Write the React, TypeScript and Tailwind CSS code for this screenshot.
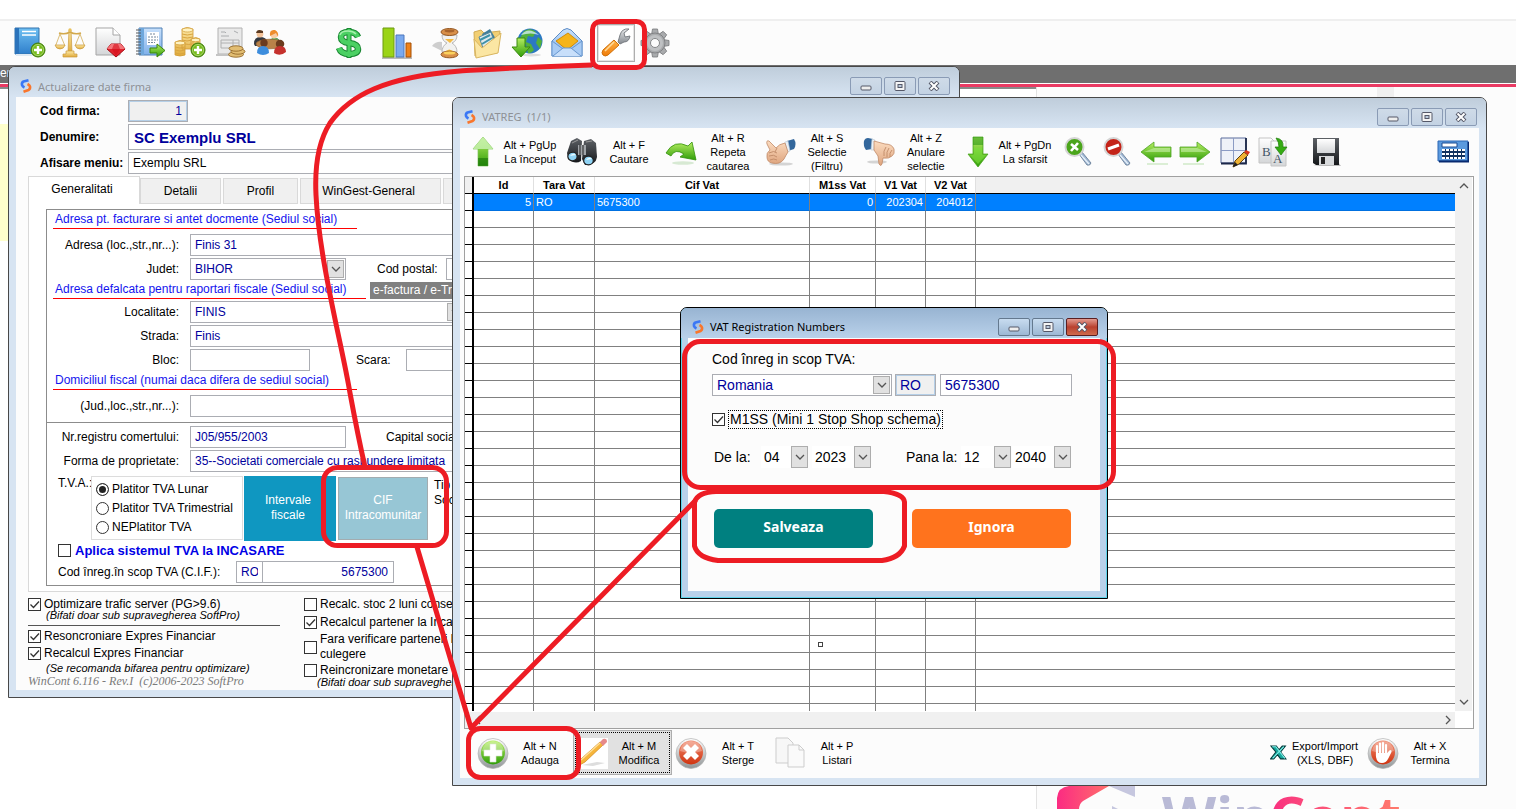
import React from "react";

type Kids = { children?: React.ReactNode };

/* ---------- icons ---------- */

function Ico({ children, className = "size-8" }: Kids & { className?: string }) {
  return (
    <svg viewBox="0 0 32 32" className={className + " shrink-0"} aria-hidden="true">
      {children}
    </svg>
  );
}

function Gradients() {
  const defs: [string, string, string][] = [
    ["gGreen", "#b6ee62", "#2f9d08"],
    ["gBlue", "#6fc0f2", "#2f7fcb"],
    ["gGold", "#fdeaa8", "#e0aa3a"],
    ["gOrange", "#ffb347", "#f07c0a"],
    ["gGrey", "#ffffff", "#d4d6d8"],
    ["gSteel", "#e6e8ea", "#84898f"],
    ["gSky", "#c9e1fb", "#7fb0ea"],
    ["gSkin", "#fcdcc0", "#dfa680"],
    ["gBall", "#f08a6e", "#d0330f"],
    ["gDark", "#5d6166", "#15171a"],
    ["gFrame", "#ffffff", "#8f9496"],
  ];
  return (
    <svg className="absolute size-0" aria-hidden="true">
      <defs>
        {defs.map(([id, a, b]) => (
          <linearGradient key={id} id={id} x1="0" y1="0" x2="0" y2="1">
            <stop offset="0" stopColor={a} />
            <stop offset="1" stopColor={b} />
          </linearGradient>
        ))}
      </defs>
    </svg>
  );
}

const PlusBadge = () => (
  <g>
    <circle cx="24" cy="23" r="7" fill="#69a91b" stroke="#3f7d08" />
    <circle cx="24" cy="23" r="5.6" fill="#76bb1c" stroke="#b5dd7c" strokeWidth=".8" />
    <path d="M24 19v8M20 23h8" stroke="#fff" strokeWidth="2.4" />
  </g>
);

const BookIcon = () => (
  <Ico>
    <path d="M1 1h24v26H1z" fill="url(#gBlue)" stroke="#3273ad" />
    <path d="M1 1h4v26H1z" fill="#2b73bb" />
    <path d="M8 4.500h14M8 8h14" stroke="#fff" strokeWidth="1.3" />
    <path d="M2 28h22" stroke="#dfe9f2" strokeWidth="2" />
    <PlusBadge />
  </Ico>
);
const ScalesIcon = () => (
  <Ico>
    <path d="M15 3h2l1 22h-4z" fill="url(#gGold)" stroke="#c89a3c" strokeWidth=".7" />
    <path d="M5 6q6 2 11-1 5 3 11 1" fill="none" stroke="#d3a94c" strokeWidth="1.6" />
    <path d="M6 7L1.500 19M6 7l5 12M26 7l-5 12M26 7l4.500 12" stroke="#d8b76a" strokeWidth=".9" />
    <path d="M1 18h10q-1 4-5 4t-5-4zM21 18h10q-1 4-5 4t-5-4z" fill="url(#gGold)" stroke="#c89a3c" strokeWidth=".7" />
    <path d="M12 24h8v3h3v3H9v-3h3z" fill="url(#gGold)" stroke="#c89a3c" strokeWidth=".7" />
    <circle cx="16" cy="3" r="1.700" fill="#e9c25c" />
  </Ico>
);
const GemDocIcon = () => (
  <Ico>
    <path d="M2 1h17l7 7v20H2z" fill="url(#gGrey)" stroke="#a5a5a5" />
    <path d="M19 1v7h7" fill="#fff" stroke="#a5a5a5" />
    <path d="M17 17h10l4 5-9 8-9-8z" fill="#e2232d" stroke="#a80c14" />
    <path d="M17 17h10l4 5H13z" fill="#f4757a" />
    <path d="M18 22l4 7 4-7-2-5h-4z" fill="#d30f1b" opacity=".6" />
  </Ico>
);
const NotebookIcon = () => (
  <Ico>
    <path d="M5 1h23v27H5z" fill="url(#gSky)" stroke="#4f80b6" />
    <path d="M5 1h5v27H5z" fill="#6ea7dc" />
    <path d="M13 5h12v13H13z" fill="#fff" />
    <path d="M16 7h6M14 10h10M14 13h10M14 15.500h7" stroke="#74889c" strokeWidth="1.200" strokeDasharray="2 1" />
    <path d="M2 3h5M2 6h5M2 9h5M2 12h5M2 15h5M2 18h5M2 21h5M2 24h5M2 27h5" stroke="#55585c" strokeWidth="1.200" />
    <path d="M16 21h7v-4l8 6.500-8 6.500v-4h-7z" fill="url(#gGreen)" stroke="#3d850c" />
  </Ico>
);
const CoinsIcon = () => (
  <Ico>
    <g fill="url(#gGold)" stroke="#d09a32" strokeWidth=".8">
      <path d="M8 2q5-3 11 0v20H8zM1 15q5-3 10 0v13q-5 2-10 0zM17 12q5-3 9 0v10h-9z" />
    </g>
    <g fill="#fff3c2" stroke="#d09a32" strokeWidth=".7">
      <ellipse cx="13.500" cy="3" rx="5.500" ry="2" />
      <ellipse cx="6" cy="16" rx="5" ry="1.900" />
      <ellipse cx="21.500" cy="13" rx="4.500" ry="1.700" />
    </g>
    <path d="M8 7q5 2 11 0M8 10q5 2 11 0M8 13q5 2 10 0M11 17q4 1 7 0M1 20q5 2 10 0M1 23q5 2 10 0M1 26q5 2 10 0" fill="none" stroke="#d9a540" />
    <PlusBadge />
  </Ico>
);
const InvoiceIcon = () => (
  <Ico>
    <path d="M4 1h24v26H4z" fill="#e9e9e9" stroke="#b2b2b2" />
    <path d="M7 5h4l1 1M20 4l4 2M7 9h8" stroke="#aaacae" fill="none" />
    <path d="M7 13h18v8H7zM7 16h18M19 13v8" fill="none" stroke="#b0b0b0" />
    <path d="M2 28h16" stroke="#c4c4c4" strokeWidth="2" />
    <g fill="#e2bd72" stroke="#93692a" strokeWidth=".9">
      <ellipse cx="22" cy="27.500" rx="7.500" ry="2.700" />
      <ellipse cx="24" cy="24.500" rx="7" ry="2.700" />
      <ellipse cx="22" cy="21.500" rx="7" ry="2.700" />
    </g>
  </Ico>
);
const MeetingIcon = () => (
  <Ico>
    <path d="M0 17q0-7 6-7t8 5l-4 4-9 0zM14 17q1-6 7-6t5 8z" fill="#33373f" />
    <path d="M16 14q2-4 6-3t4 6l-8 1z" fill="#5cb25e" />
    <ellipse cx="16" cy="17" rx="14" ry="4.800" fill="#b98249" stroke="#8c5c2d" strokeWidth=".6" />
    <circle cx="6" cy="7" r="3.400" fill="#f3c39a" />
    <path d="M2 6q1-5 7-2v2z" fill="#5b3a21" />
    <circle cx="20" cy="8" r="3.400" fill="#f7cda6" />
    <path d="M16 9q-1-7 5-6 4 2 3 7l-2-4z" fill="#ee8c2c" />
    <circle cx="10" cy="16" r="3.700" fill="#6b3b1e" />
    <circle cx="26" cy="17" r="4.200" fill="#6b3b1e" />
    <path d="M3 26q0-7 6-7t6 7q-6 4-12 0z" fill="#3d8ddd" />
    <path d="M20 26q0-7 6-7t6 6q-6 5-12 1z" fill="#c5312d" />
  </Ico>
);
const DollarIcon = () => (
  <Ico>
    <path d="M16 1v30" stroke="#198c34" strokeWidth="5" />
    <path d="M25 10q-2-5-9-5-8 0-8 5t8 6q9 1 9 6t-9 5q-8 0-10-6" fill="none" stroke="#178530" strokeWidth="6.500" />
    <path d="M16 2v28" stroke="#4bd063" strokeWidth="3" />
    <path d="M25 10q-2-5-9-5-8 0-8 5t8 6q9 1 9 6t-9 5q-8 0-10-6" fill="none" stroke="#4bd063" strokeWidth="4.600" />
    <path d="M23 7q-3-3-8-3-7 0-8 4" fill="none" stroke="#a5efab" strokeWidth="1.500" />
  </Ico>
);
const ChartIcon = () => (
  <Ico>
    <path d="M1 31h30" stroke="#777" />
    <path d="M2 1h11v29H2z" fill="#9bd416" stroke="#6c9a10" />
    <path d="M15 8h8v22h-8z" fill="#7aa9ee" stroke="#4c77bd" />
    <path d="M25 16h5v14h-5z" fill="#f08218" stroke="#a34f04" />
  </Ico>
);
const HourglassIcon = () => (
  <Ico>
    <path d="M1 19q4-5 10-4v9z" fill="#bbb" opacity=".7" />
    <path d="M11 8h15q0 6-5 8 5 3 5 9H11q0-6 5-9-5-2-5-8z" fill="#f2f2f0" stroke="#b9b9b9" />
    <path d="M14 12h9l-4 4zM13 26q5-7 11 0z" fill="#f4bb45" />
    <ellipse cx="18.500" cy="5" rx="8.500" ry="3.500" fill="#d99049" stroke="#955721" />
    <ellipse cx="18.500" cy="4" rx="5" ry="1.400" fill="#a8642c" />
    <ellipse cx="18.500" cy="27.500" rx="8.500" ry="3.300" fill="#d99049" stroke="#955721" />
    <ellipse cx="18.500" cy="26" rx="6" ry="1.600" fill="#fbd25e" />
  </Ico>
);
const FolderIcon = () => (
  <Ico>
    <path d="M3 5l7-2 3 3 16-2-3 22-22 3z" fill="#f2cf73" stroke="#d2ac54" />
    <path d="M11 7l8-5 7 12-10 4z" fill="#3f7d9b" />
    <path d="M8 10l12-5 3 10-11 6z" fill="#dfe9ec" stroke="#58899b" />
    <path d="M9 13l10-5M11 17l10-6" stroke="#3d91a8" strokeWidth="2" />
    <path d="M3 12l8 9 19-15-3 20-22 5z" fill="#fbe6a3" stroke="#d9b661" />
  </Ico>
);
const GlobeIcon = () => (
  <Ico>
    <ellipse cx="20" cy="28" rx="10" ry="1.500" fill="#ddd" />
    <circle cx="19" cy="14" r="12.500" fill="#2c79c2" />
    <path d="M13 4q7-4 12 1l-3 5-5-1-2 6 5 2 3 6q-3 4-6 3l-2-9-7-4zM27 10l4 4-2 8-4-6z" fill="#53b03b" />
    <path d="M10 8q7-9 18 0-8-3-18 0z" fill="#d9efff" opacity=".75" />
    <path d="M6 11h8v9h5l-9 10-9-10h5z" fill="url(#gGreen)" stroke="#3a8a10" />
  </Ico>
);
const MailIcon = () => (
  <Ico>
    <path d="M1 14L12 3q4-3 8 0l11 11v15H1z" fill="url(#gSky)" stroke="#5d8cc6" />
    <path d="M5 14L17 6l10 8-11 9z" fill="#f6b41a" stroke="#d18d0a" />
    <path d="M1 14l11 8h8l11-8v15H1z" fill="#a8cbf4" stroke="#6897cf" />
    <path d="M2 29l10-8h8l10 8" fill="#c8dffa" stroke="#6897cf" />
  </Ico>
);
const WrenchIcon = () => (
  <Ico>
    <path d="M18 15l2-7q2-7 9-6l-5 4 1 4 5-1q-1 6-6 6l-4 2z" fill="url(#gSteel)" stroke="#70757a" strokeWidth=".9" />
    <path d="M14 13l5 5L8 28q-3 2-5 0t0-5z" fill="url(#gOrange)" stroke="#d07009" />
    <path d="M14 15L5 24" stroke="#ffd998" strokeWidth="1.600" />
  </Ico>
);
const GearIcon = () => (
  <Ico>
    <g fill="#a9abad" stroke="#77797b" strokeWidth=".8">
      {[0, 45, 90, 135, 180, 225, 270, 315].map((a) => (
        <path key={a} d="M12.500 8l1-6h5l1 6z" transform={`rotate(${a} 16 16)`} />
      ))}
      <circle cx="16" cy="16" r="10" />
    </g>
    <circle cx="16" cy="16" r="8" fill="#bfc1c3" />
    <circle cx="16" cy="16" r="4.500" fill="#fcfcfc" stroke="#858789" />
  </Ico>
);
const UpArrow = () => (
  <Ico>
    <path d="M16 1l10 12h-5v17H11V13H6z" fill="url(#gGreen)" stroke="#7cc158" strokeWidth=".7" />
    <path d="M16 1l10 12H6z" fill="#c9f2b4" opacity=".8" />
    <path d="M11 22h10v8H11z" fill="#14700a" opacity=".55" />
  </Ico>
);
const DownArrow = () => (
  <Ico>
    <path d="M16 31L6 18h5V1h10v17h5z" fill="url(#gGreen)" stroke="#3fa013" strokeWidth=".7" />
    <path d="M11 1h10v8H11z" fill="#1c8a10" opacity=".5" />
    <path d="M12 12h8v7h4l-8 9-8-9h4z" fill="#7be03c" opacity=".6" />
  </Ico>
);
const BinocularsIcon = () => (
  <Ico>
    <path d="M5 5l6-3 5 3-1 20q-6 4-13-2l-1-6z" fill="url(#gDark)" />
    <path d="M18 5l7-2 5 4 1 14q-1 8-12 8l-3-6z" fill="url(#gDark)" />
    <path d="M12 9h8v10h-8z" fill="#a0a4a8" />
    <path d="M14 9v10M17 9v10" stroke="#222" />
    <ellipse cx="6.500" cy="20.500" rx="4.600" ry="4.200" fill="#8fd3f4" stroke="#222" strokeWidth="1.200" transform="rotate(-20 6.500 20.500)" />
    <ellipse cx="22.500" cy="24.500" rx="4.800" ry="4.400" fill="#8fd3f4" stroke="#222" strokeWidth="1.200" />
    <path d="M4 20q3-4 6-1zM20 24q3-4 6-1z" fill="#eafaff" />
    <path d="M6 7l6-3M20 6l6-1" stroke="#999" />
  </Ico>
);
const RedoArrow = () => (
  <Ico>
    <ellipse cx="18" cy="27" rx="11" ry="1.800" fill="#d7e9d3" />
    <path d="M1 17Q9 3 23 10l4-4 4 18-16-3 4-3Q10 12 6 20z" fill="url(#gGreen)" stroke="#319009" strokeWidth=".8" />
  </Ico>
);
const ThumbUp = () => (
  <Ico>
    <ellipse cx="17" cy="28" rx="12" ry="1.600" fill="#d4d4d4" />
    <path d="M23 5l7-2q3 5 0 10l-6 2z" fill="#33679c" />
    <path d="M21 6l3-1 2 10-3 1z" fill="#eaf1f7" stroke="#b9c6d2" strokeWidth=".6" />
    <path d="M21 7q-6 1-9 5L5 5Q2 4 3 8l3 6q-4 3-3 7 0 5 5 6 8 2 12-4 2-4 4-7z" fill="url(#gSkin)" stroke="#c08a68" strokeWidth=".8" />
    <path d="M5 17q5-3 8 0M5 20q5-2 8 1M6 24q4-2 7 0M13 12l-2 4" fill="none" stroke="#c08a68" strokeWidth=".9" />
  </Ico>
);
const ThumbDown = () => (
  <Ico>
    <ellipse cx="14" cy="26" rx="10" ry="1.600" fill="#d4d4d4" />
    <path d="M1 5q1-3 4-3l5 1-1 10-6 1Q0 10 1 5z" fill="#33679c" />
    <path d="M9 3l3 1-1 10-3 0z" fill="#eaf1f7" stroke="#b9c6d2" strokeWidth=".6" />
    <path d="M11 5l11 3q7 0 9 5 1 5-2 7-3 3-9 2l-1 6q-1 3-3 0l-1-8-4-6z" fill="url(#gSkin)" stroke="#c08a68" strokeWidth=".8" />
    <path d="M23 11q-3 4-2 9M26 12q-3 4-2 9M29 14q-3 3-2 7" fill="none" stroke="#c08a68" strokeWidth=".9" />
  </Ico>
);
const Magnifier = ({ plus }: { plus?: boolean }) => (
  <Ico>
    <path d="M17 18l3-2 9 11q-1 3-4 2z" fill="#9fb8d4" stroke="#6a7f99" strokeWidth=".9" />
    <path d="M19 19l8 9" stroke="#e8f1fa" strokeWidth="1.300" />
    <circle cx="12.500" cy="11" r="9" fill={plus ? "#4ba51b" : "#c42318"} stroke="#d4d4d4" strokeWidth="2" />
    {plus ? (
      <path d="M9 8l7 6M16 7l-7 8" stroke="#fff" strokeWidth="2.600" />
    ) : (
      <path d="M7 13l11-4" stroke="#fff" strokeWidth="3" />
    )}
  </Ico>
);
const SideArrow = ({ right }: { right?: boolean }) => (
  <Ico>
    <g transform={right ? "matrix(-1 0 0 1 32 0)" : undefined}>
      <path d="M7 28h21" stroke="#dbeed5" strokeWidth="2" />
      <path d="M1 16L14 6v5h17v10H14v5z" fill="url(#gGreen)" stroke="#4fa326" strokeWidth=".8" />
      <path d="M14 12h16v4H4z" fill="#d3f6bd" opacity=".5" />
    </g>
  </Ico>
);
const GridPencil = () => (
  <Ico>
    <path d="M3 2h25v25H3z" fill="#eef1f8" stroke="#5a6c9c" />
    <path d="M15.500 2v25M3 14.500h25" stroke="#8b9bc4" />
    <path d="M28 2v25.500H3" fill="none" stroke="#1b2748" strokeWidth="1.800" />
    <path d="M15 31l2-6 9-9 4 3-9 9z" fill="#efb232" stroke="#5d4213" />
    <path d="M26 16l2-2 4 2-2 3z" fill="#d8361c" />
    <path d="M15 31l2-5 3 3z" fill="#222" />
  </Ico>
);
const FontDocs = () => (
  <Ico>
    <path d="M2 2h12l4 4v21H2z" fill="url(#gGrey)" stroke="#c4c4c4" />
    <path d="M14 5h15v25H14z" fill="url(#gGrey)" stroke="#c4c4c4" />
    <text x="5" y="20" fontSize="13" fontFamily="Liberation Serif, serif" fill="#445566">B</text>
    <text x="16" y="27" fontSize="13" fontFamily="Liberation Serif, serif" fill="#445566">A</text>
    <path d="M19 2q8 1 7 9h4l-6 8-6-8h4q0-5-3-9z" fill="#35ab12" stroke="#1c7c08" strokeWidth=".7" />
  </Ico>
);
const FloppyIcon = () => (
  <Ico>
    <path d="M3 30h28l-3-4z" fill="#bbb" />
    <path d="M3 2h26v27H6l-3-2z" fill="url(#gDark)" />
    <path d="M7 3h18v14H7z" fill="url(#gGrey)" />
    <path d="M9 20h15v9H9z" fill="#d8dadc" />
    <path d="M11 21h4v7h-4z" fill="#222" />
  </Ico>
);
const CalcIcon = () => (
  <Ico>
    <path d="M1 5h30v20H1z" fill="#5b9ade" stroke="#2c66b4" />
    <path d="M5 7h15v4H5z" fill="#fff" stroke="#1a4a93" />
    <path d="M5 13h23v10H5z" fill="#10315f" />
    <path d="M5 14h23M5 18h23M5 22h23" stroke="#fff" strokeWidth="2.200" strokeDasharray="3 1" />
    <path d="M2 25.500h29.500V6" fill="none" stroke="#082a70" strokeWidth="1.800" />
  </Ico>
);
const Ball = ({ green, children }: Kids & { green?: boolean }) => (
  <Ico>
    <circle cx="16" cy="16.500" r="15" fill="url(#gFrame)" stroke="#b0b0b0" strokeWidth=".7" />
    <circle cx="16" cy="15.500" r="12" fill={green ? "url(#gGreen)" : "url(#gBall)"} />
    <path d="M5 14Q7 4 16 4t11 10q-11 4-22 0z" fill="#fff" opacity=".3" />
    {children}
  </Ico>
);
const AddIcon = () => (
  <Ball green>
    <path d="M13 7h6v6h6v6h-6v6h-6v-6H7v-6h6z" fill="#fff" stroke="#d9e6d0" strokeWidth=".6" />
  </Ball>
);
const DeleteIcon = () => (
  <Ball>
    <path d="M8 11l4-4 4 4 4-4 4 4-4 4 4 4-4 4-4-4-4 4-4-4 4-4z" fill="#fff" />
  </Ball>
);
const StopIcon = () => (
  <Ball>
    <path d="M10 19V9M13 18V6.500M16 18V6M19 18V8" stroke="#fff" strokeWidth="2.200" strokeLinecap="round" />
    <path d="M9 16h11l3-3q2 0 1.500 2L21 22q-2 4-6 4-5 0-6-6z" fill="#fff" />
  </Ball>
);
const PencilIcon = () => (
  <Ico>
    <path d="M0 1h32v31H0z" fill="#fff" />
    <path d="M6 28l15-3 8 1-12 3z" fill="#ddd" />
    <path d="M2 29l3-7L24 5l3 3L9 25z" fill="#f6b53a" stroke="#cf8417" strokeWidth=".7" />
    <path d="M5 23L24 6" stroke="#ffe09a" strokeWidth="1.300" />
    <path d="M24 5l3-3q4-1 4 3l-4 4z" fill="#e6898a" />
    <path d="M2 29l1-3 2 1z" fill="#333" />
  </Ico>
);
const PagesIcon = () => (
  <Ico>
    <path d="M2 1h12l5 5v20H2z" fill="#f7f7f7" stroke="#cdcdcd" />
    <path d="M14 8h11l5 5v17H14z" fill="#fafafa" stroke="#cdcdcd" />
    <path d="M25 8v5h5" fill="none" stroke="#cdcdcd" />
  </Ico>
);
const ExcelIcon = () => (
  <Ico className="size-[17px]">
    <path d="M2 4h10l5 7 6-7h6l-9 11 10 13H20l-6-8-7 8H1l10-13z" fill="#17a79c" stroke="#043c3c" strokeWidth="2" />
    <path d="M4 5h7l17 22M26 5L5 27" fill="none" stroke="#7ff0ea" strokeWidth="2" />
  </Ico>
);

const Logo = () => (
  <svg viewBox="0 0 16 16" className="size-4 shrink-0" aria-hidden="true">
    <path d="M10.500 2.200L5.500 3.500Q3.500 4.500 4 7q.5 1.500 2.500 2.500" fill="none" stroke="#3b78f5" strokeWidth="2.600" />
    <path d="M5.500 13.800l5-1.800q2-1 1.500-3.500-.5-1.500-2.500-2.500" fill="none" stroke="#f9762c" strokeWidth="2.600" />
  </svg>
);

const Chevron = () => (
  <svg viewBox="0 0 10 6" className="h-[6px] w-[10px]" aria-hidden="true">
    <path d="M1 1l4 4 4-4" fill="none" stroke="#555" strokeWidth="1.300" />
  </svg>
);

/* ---------- controls ---------- */

function CaptionButton({ kind, active }: { kind: "min" | "max" | "close"; active?: boolean }) {
  const tone =
    active && kind === "close"
      ? "border-[#5a1f22] bg-linear-to-b from-[#e29a90] via-[#b9402f] to-[#cf6a4c]"
      : active
        ? "border-[#64798f] bg-linear-to-b from-[#c8dcf0] to-[#9db8d4]"
        : "border-[#8a9bb5] bg-linear-to-b from-[#cfdbe8] to-[#c3d2e3]";
  return (
    <button type="button" aria-label={kind} className={"grid h-[18px] w-8 place-items-center rounded-[2px] border " + tone}>
      <svg viewBox="0 0 14 10" className="h-[10px] w-[14px]" aria-hidden="true">
        {kind === "min" && <rect x="2" y="5" width="10" height="4" rx="1" fill="#eee" stroke="#555868" />}
        {kind === "max" && (
          <g fill="#f4f4f4" stroke="#555868">
            <rect x="2" y="0.500" width="10" height="9" rx="1" />
            <rect x="5" y="3.500" width="4" height="3" fill="#b9c9dc" />
          </g>
        )}
        {kind === "close" && (
          <g>
            <path d="M3 1l8 8M11 1L3 9" stroke="#555868" strokeWidth="4" />
            <path d="M3.500 1.500l7 7M10.500 1.500l-7 7" stroke="#fff" strokeWidth="2" />
          </g>
        )}
      </svg>
    </button>
  );
}

function Frame({ title, active, className, children }: Kids & { title: string; active?: boolean; className: string }) {
  return (
    <section
      className={
        "absolute flex flex-col rounded-t-[7px] border px-[7px] pb-[7px] " +
        (active ? "border-black bg-[#b9d1ea] " : "border-[#484848] bg-[#d7e4f2] ") +
        className
      }
    >
      <header
        className={
          "-mx-[7px] flex h-[30px] shrink-0 items-end gap-[2px] rounded-t-[6px] bg-linear-to-b pr-[9px] pb-[2px] pl-[9px] " +
          (active ? "from-[#98b4d2] to-[#b9d1ea]" : "from-[#bfcddb] to-[#d7e4f2]")
        }
      >
        <h2
          className={
            "flex h-[18px] flex-1 items-center gap-1 font-['Noto_Sans',sans-serif] text-[11px] whitespace-pre " +
            (active ? "text-black" : "text-[#8e9196]")
          }
        >
          <Logo />
          {title}
        </h2>
        <CaptionButton kind="min" active={active} />
        <CaptionButton kind="max" active={active} />
        <CaptionButton kind="close" active={active} />
      </header>
      <div className="flex min-h-0 flex-1 flex-col overflow-hidden bg-[#fcfcfc]">{children}</div>
    </section>
  );
}

const field = "h-[22px] min-w-0 border border-[#abadb3] bg-white px-1 text-[#00009c] outline-none ";

function Row({ id, label, children, className = "mt-[2px]" }: Kids & { id: string; label: string; className?: string }) {
  return (
    <div className={"flex h-[22px] items-center " + className}>
      <label htmlFor={id} className="mr-[11px] w-[132px] shrink-0 text-right whitespace-nowrap">
        {label}
      </label>
      {children}
    </div>
  );
}

function Heading({ children, className }: Kids & { className: string }) {
  return (
    <h3 className={"ml-[6px] shrink-0 border-b border-[#f00] pl-[2px] whitespace-nowrap text-[#1414ee] " + className}>{children}</h3>
  );
}

function Tick({ id, label, checked, children, className = "" }: Kids & { id: string; label?: string; checked?: boolean; className?: string }) {
  return (
    <label htmlFor={id} className={"flex items-center gap-[3px] whitespace-nowrap " + className}>
      <span className="grid size-[13px] shrink-0 place-items-center">
        <input
          id={id}
          type="checkbox"
          defaultChecked={checked}
          className="peer size-[13px] appearance-none border border-[#333] bg-white [grid-area:1/1]"
        />
        <svg viewBox="0 0 13 13" className="pointer-events-none invisible size-[13px] [grid-area:1/1] peer-checked:visible" aria-hidden="true">
          <path d="M2.500 6.500l3 3 5.500-6" fill="none" stroke="#333" strokeWidth="1.300" />
        </svg>
      </span>
      {label}
      {children}
    </label>
  );
}

function Radio({ label, checked }: { label: string; checked?: boolean }) {
  return (
    <label className="flex h-[19px] items-center gap-[3px] whitespace-nowrap">
      <input
        type="radio"
        name="tva"
        defaultChecked={checked}
        className="size-[13px] shrink-0 appearance-none rounded-full border border-[#333] bg-white checked:bg-[#222] checked:shadow-[inset_0_0_0_2px_#fff]"
      />
      {label}
    </label>
  );
}

function Select({ id, value, label, className, bare }: { id: string; value: string; label?: string; className: string; bare?: boolean }) {
  return (
    <span className={"flex h-[22px] shrink-0 items-center bg-white " + (bare ? "" : "border border-[#abadb3] p-px ") + className}>
      <select
        id={id}
        aria-label={label}
        defaultValue={value}
        className={"min-w-0 flex-1 appearance-none outline-none " + (bare ? "pl-[3px] text-black" : "pl-[3px] text-[#00009c]")}
      >
        <option>{value}</option>
      </select>
      <span className="pointer-events-none grid w-[17px] shrink-0 place-items-center self-stretch border border-[#adadad] bg-[#e1e1e1]">
        <Chevron />
      </span>
    </span>
  );
}

/* ---------- application bar ---------- */

function ToolButton({ children, className = "w-10" }: Kids & { className?: string }) {
  return (
    <button type="button" className={"grid h-[38px] shrink-0 place-items-center " + className}>
      {children}
    </button>
  );
}

function MainBar() {
  return (
    <nav className="mt-[19px] flex h-[46px] shrink-0 items-center border-t-2 border-[#efefef] bg-[#fcfcfc] pl-[10px]">
      <ToolButton><BookIcon /></ToolButton>
      <ToolButton><ScalesIcon /></ToolButton>
      <ToolButton><GemDocIcon /></ToolButton>
      <ToolButton><NotebookIcon /></ToolButton>
      <ToolButton><CoinsIcon /></ToolButton>
      <ToolButton><InvoiceIcon /></ToolButton>
      <ToolButton><MeetingIcon /></ToolButton>
      <ToolButton className="ml-[39px] w-10"><DollarIcon /></ToolButton>
      <ToolButton className="ml-2 w-10"><ChartIcon /></ToolButton>
      <ToolButton className="ml-[10px] w-10"><HourglassIcon /></ToolButton>
      <ToolButton><FolderIcon /></ToolButton>
      <ToolButton><GlobeIcon /></ToolButton>
      <ToolButton><MailIcon /></ToolButton>
      <ToolButton className="ml-[10px] w-[38px] border border-[#adadad] bg-white ring-1 ring-[#e4e4e4] ring-inset"><WrenchIcon /></ToolButton>
      <ToolButton><GearIcon /></ToolButton>
    </nav>
  );
}

/* ---------- company window ---------- */

function CompanyWindow() {
  const tab = "h-[26px] border border-[#d9d9d9] bg-[#f0f0f0] ";
  return (
    <Frame title="Actualizare date firma" className="top-[66px] left-2 h-[632px] w-[952px] text-[12px] leading-[15px]">
      <div className="grid grid-cols-[88px_1fr] items-center gap-y-[2px] pt-[3px] pl-6 font-bold">
        <label htmlFor="cod">Cod firma:</label>
        <input id="cod" readOnly defaultValue="1" className="h-[22px] w-[60px] border border-[#abadb3] bg-[#f0f0f0] px-[5px] text-right font-normal text-[#00009c] ring-1 ring-[#b5cfe7] ring-inset" />
        <label htmlFor="den">Denumire:</label>
        <input id="den" defaultValue="SC Exemplu SRL" className="h-[26px] border border-[#abadb3] bg-white px-[5px] text-[15px] text-[#00009c]" />
        <label htmlFor="afis" className="whitespace-nowrap">Afisare meniu:</label>
        <input id="afis" defaultValue="Exemplu SRL" className="h-[22px] border border-[#abadb3] bg-white px-1 font-normal" />
      </div>

      <div className="mt-[2px] ml-3 flex h-7 items-end gap-[2px]" role="tablist">
        <button type="button" role="tab" aria-selected="true" className="-mr-[2px] h-7 w-[112px] border border-b-0 border-[#d9d9d9] bg-white pr-1 pb-[2px]">Generalitati</button>
        <button type="button" role="tab" className={tab + "w-[81px]"}>Detalii</button>
        <button type="button" role="tab" className={tab + "w-[75px]"}>Profil</button>
        <button type="button" role="tab" className={tab + "w-[141px] pr-1"}>WinGest-General</button>
        <button type="button" role="tab" aria-label="Urmatoarele" className={tab + "w-[90px]"} />
      </div>

      <div className="mr-3 ml-3 border border-t-0 border-[#d9d9d9] bg-white pt-[5px] pr-3 pb-[5px] pl-[17px]">
        <div className="border border-[#8c8c8c] pb-[2px]">
          <Heading className="h-[19px] w-[304px] pt-[2px]">Adresa pt. facturare si antet docmente (Sediul social)</Heading>
          <Row id="adr" label="Adresa (loc.,str.,nr...):" className="mt-[5px]">
            <input id="adr" defaultValue="Finis 31" className={field + "w-[400px]"} />
          </Row>
          <Row id="judet" label="Judet:">
            <Select id="judet" value="BIHOR" className="w-[156px]" />
            <label htmlFor="cp" className="ml-[31px] w-[69px]">Cod postal:</label>
            <input id="cp" className={field + "w-[100px]"} />
          </Row>
          <div className="mt-[2px] flex gap-1">
            <Heading className="h-[17px] w-[313px]">Adresa defalcata pentru raportari fiscale (Sediul social)</Heading>
            <button type="button" className="h-[17px] bg-[#808080] px-[3px] text-white">e-factura / e-Transport</button>
          </div>
          <Row id="loc" label="Localitate:">
            <Select id="loc" value="FINIS" className="w-[276px]" />
          </Row>
          <Row id="str" label="Strada:">
            <input id="str" defaultValue="Finis" className={field + "w-[400px]"} />
          </Row>
          <Row id="bloc" label="Bloc:">
            <input id="bloc" className={field + "w-[120px]"} />
            <label htmlFor="scara" className="ml-[46px] w-[50px]">Scara:</label>
            <input id="scara" className={field + "w-[120px]"} />
          </Row>
          <Heading className="mt-[2px] h-[17px] w-[304px]">Domiciliul fiscal (numai daca difera de sediul social)</Heading>
          <Row id="jud" label="(Jud.,loc.,str.,nr...):" className="mt-[5px]">
            <input id="jud" className={field + "w-[400px]"} />
          </Row>
          <hr className="mt-[5px] border-[#8c8c8c]" />
          <Row id="reg" label="Nr.registru comertului:" className="mt-[3px]">
            <input id="reg" defaultValue="J05/955/2003" className={field + "w-[156px]"} />
            <label htmlFor="cap" className="ml-[40px] w-[90px]">Capital social:</label>
            <input id="cap" className={field + "w-[100px]"} />
          </Row>
          <Row id="forma" label="Forma de proprietate:">
            <input id="forma" defaultValue="35--Societati comerciale cu raspundere limitata" className={field + "w-[400px]"} />
          </Row>

          <div className="mt-1 flex h-[65px] items-start pl-[11px]">
            <span className="w-[33px]">T.V.A.:</span>
            <fieldset className="h-16 w-[152px] border border-[#dcdcdc] pt-[3px] pl-1">
              <Radio label="Platitor TVA Lunar" checked />
              <Radio label="Platitor TVA Trimestrial" />
              <Radio label="NEPlatitor TVA" />
            </fieldset>
            <button type="button" className="ml-px h-[65px] w-[92px] bg-[#0f97c1] pr-6 pb-[2px] pl-5 text-white">Intervale fiscale</button>
            <button type="button" className="ml-[2px] h-[63px] w-[90px] self-center border border-[#a3acb0] bg-[#97c6d5] pb-[2px] text-white">CIF<br />Intracomunitar</button>
            <span className="ml-[6px] pt-[2px]">Tip<br />Societate</span>
          </div>
          <Tick id="incasare" className="mt-px h-4 gap-[4px] pl-[11px] text-[13px] font-bold text-[#0000e6]" label="Aplica sistemul TVA la INCASARE" />
          <div className="mt-[3px] flex h-[22px] items-center pl-[11px]">
            <label htmlFor="cif" className="w-[178px]">Cod înreg.în scop TVA (C.I.F.):</label>
            <input aria-label="Prefix" defaultValue="RO" className={field + "w-[27px]"} />
            <input id="cif" defaultValue="5675300" className={field + "-ml-px w-[132px] px-[5px] text-right"} />
          </div>
        </div>
      </div>

      <div className="mx-3 grid grid-cols-[252px_1fr] gap-x-6 pt-1">
        <div>
          <Tick id="opt" checked className="h-4" label="Optimizare trafic server (PG>9.6)" />
          <p className="-mt-1 pl-[18px] text-[11px] leading-[14px] italic">(Bifati doar sub supravegherea SoftPro)</p>
          <hr className="mt-[3px] border-[#555]" />
          <Tick id="res" checked className="mt-[2px] h-[17px]" label="Resoncroniare Expres Financiar" />
          <Tick id="rec" checked className="h-[17px]" label="Recalcul Expres Financiar" />
          <p className="pl-[18px] text-[11px] leading-[13px] italic">(Se recomanda bifarea pentru optimizare)</p>
          <p className="font-['Liberation_Serif',serif] text-[12px] leading-[13px] whitespace-pre text-[#7a7a7a] italic">WinCont 6.116 - Rev.I  (c)2006-2023 SoftPro</p>
        </div>
        <div>
          <Tick id="stoc" className="h-4" label="Recalc. stoc 2 luni consecutive" />
          <Tick id="part" checked className="mt-[2px] h-[17px]" label="Recalcul partener la Incasari" />
          <Tick id="fara" className="mt-px h-[30px]">
            <span>Fara verificare parteneri la<br />culegere</span>
          </Tick>
          <Tick id="mon" className="h-4" label="Reincronizare monetare" />
          <p className="-mt-[3px] pl-[13px] text-[11px] leading-[14px] italic">(Bifati doar sub supravegherea SoftPro)</p>
        </div>
      </div>
    </Frame>
  );
}

/* ---------- VAT registry window ---------- */

function ActionButton({ icon, lines, className = "" }: { icon: React.ReactNode; lines: string[]; className?: string }) {
  return (
    <button type="button" className={"flex h-[45px] w-[99px] shrink-0 items-center " + className}>
      <span className="grid w-[38px] shrink-0 place-items-center">{icon}</span>
      <span className="flex w-14 flex-col items-center text-[11px] leading-[14px] whitespace-nowrap">
        {lines.map((l) => (
          <span key={l}>{l}</span>
        ))}
      </span>
    </button>
  );
}

function VatGrid() {
  const cols = [
    { name: "Id", value: "5", right: true },
    { name: "Tara Vat", value: "RO" },
    { name: "Cif Vat", value: "5675300" },
    { name: "M1ss Vat", value: "0", right: true },
    { name: "V1 Vat", value: "202304", right: true },
    { name: "V2 Vat", value: "204012", right: true },
  ];
  const empty = Array.from({ length: 29 }, (_, i) => i);
  const line = "border-r border-b border-[#808080] p-0";
  return (
    <div className="mx-1 mr-[5px] flex flex-col border border-[#a0a0a0] bg-white">
      <div className="flex">
        <table className="min-w-0 flex-1 table-fixed border-separate border-spacing-0 text-[11px] leading-4">
          <colgroup>
            <col className="w-[9px]" />
            <col className="w-[60px]" />
            <col className="w-[61px]" />
            <col className="w-[215px]" />
            <col className="w-[66px]" />
            <col className="w-[50px]" />
            <col className="w-[50px]" />
            <col />
          </colgroup>
          <thead>
            <tr className="h-[17px]">
              <th className="border-r-2 border-b border-black bg-[#f0f0f0] p-0" />
              {cols.map((c) => (
                <th key={c.name} className="border-r border-b border-r-[#e0e0e0] border-b-black p-0">{c.name}</th>
              ))}
              <th className="border-b border-black bg-[#f0f0f0] p-0" />
            </tr>
          </thead>
          <tbody>
            <tr className="h-[17px] bg-[#0080ff] text-white">
              <td className="border-r-2 border-b border-black bg-white p-0" />
              {cols.map((c) => (
                <td key={c.name} className={"border-r border-b border-r-[#808080] border-b-[#0070e0] px-[2px] py-0 " + (c.right ? "text-right" : "")}>{c.value}</td>
              ))}
              <td className="border-b border-[#0070e0] p-0" />
            </tr>
            {empty.map((r) => (
              <tr key={r} className="h-[17px]">
                <td className="border-r-2 border-b border-black p-0" />
                {cols.map((c, i) => (
                  <td key={c.name} className={line}>
                    {r === 25 && i === 3 && <span className="ml-2 block size-[5px] border border-[#444]" />}
                  </td>
                ))}
                <td className="border-b border-[#808080] p-0" />
              </tr>
            ))}
            <tr className="h-[7px]">
              <td className="border-r-2 border-black p-0" />
              {cols.map((c) => (
                <td key={c.name} className="border-r border-[#808080] p-0" />
              ))}
              <td className="p-0" />
            </tr>
          </tbody>
        </table>
        <div className="mr-px flex w-[17px] flex-col items-center justify-between bg-[#f0f0f0] py-[6px]">
          <span className="rotate-180"><Chevron /></span>
          <Chevron />
        </div>
      </div>
      <div className="flex h-[17px] items-center border-t border-white pr-[18px]">
        <div className="flex h-full flex-1 items-center justify-between bg-[#f0f0f0] pr-[2px] pl-2">
          <span className="rotate-90"><Chevron /></span>
          <span className="-rotate-90"><Chevron /></span>
        </div>
      </div>
    </div>
  );
}

function VatWindow() {
  return (
    <Frame title="VATREG  (1/1)" className="top-[97px] left-[452px] h-[689px] w-[1035px]">
      <div className="flex h-12 shrink-0 items-center pr-[10px] pl-1">
        <ActionButton icon={<UpArrow />} lines={["Alt + PgUp", "La început"]} />
        <ActionButton icon={<BinocularsIcon />} lines={["Alt + F", "Cautare"]} />
        <ActionButton icon={<RedoArrow />} lines={["Alt + R", "Repeta", "cautarea"]} />
        <ActionButton icon={<ThumbUp />} lines={["Alt + S", "Selectie", "(Filtru)"]} />
        <ActionButton icon={<ThumbDown />} lines={["Alt + Z", "Anulare", "selectie"]} />
        <ActionButton icon={<DownArrow />} lines={["Alt + PgDn", "La sfarsit"]} />
        <ToolButton className="w-[39px]"><Magnifier plus /></ToolButton>
        <ToolButton className="w-[39px]"><Magnifier /></ToolButton>
        <ToolButton className="w-[39px]"><SideArrow /></ToolButton>
        <ToolButton className="w-[39px]"><SideArrow right /></ToolButton>
        <ToolButton className="w-[39px]"><GridPencil /></ToolButton>
        <ToolButton className="w-[39px]"><FontDocs /></ToolButton>
        <ToolButton className="ml-[14px] w-[39px]"><FloppyIcon /></ToolButton>
        <ToolButton className="ml-auto w-8"><CalcIcon /></ToolButton>
      </div>
      <VatGrid />
      <div className="flex flex-1 items-center pr-4 pb-[2px] pl-[14px]">
        <ActionButton icon={<AddIcon />} lines={["Alt + N", "Adauga"]} />
        <ActionButton
          icon={<PencilIcon />}
          lines={["Alt + M", "Modifica"]}
          className="bg-[#e1e1e1] ring-1 ring-[#adadad] outline-1 -outline-offset-3 outline-black outline-dotted ring-inset"
        />
        <ActionButton icon={<DeleteIcon />} lines={["Alt + T", "Sterge"]} />
        <ActionButton icon={<PagesIcon />} lines={["Alt + P", "Listari"]} />
        <ActionButton icon={<ExcelIcon />} lines={["Export/Import", "(XLS, DBF)"]} className="mr-[6px] ml-auto" />
        <ActionButton icon={<StopIcon />} lines={["Alt + X", "Termina"]} />
      </div>
    </Frame>
  );
}

/* ---------- VAT number dialog ---------- */

function VatDialog() {
  const big = "h-[39px] w-[159px] rounded-[5px] pb-1 font-['Noto_Sans',sans-serif] text-[14px] font-bold text-white ";
  return (
    <Frame active title="VAT Registration Numbers" className="top-[307px] left-[680px] h-[292px] w-[428px] text-[14px] leading-[18px] shadow-[inset_0_0_0_1px_#5fd3ea]">
      <div className="flex flex-col pt-3 pr-7 pl-6">
        <label htmlFor="tara" className="h-[18px]">Cod înreg in scop TVA:</label>
        <div className="mt-[6px] flex">
          <Select id="tara" value="Romania" className="w-[180px]" />
          <input aria-label="Prefix tara" readOnly defaultValue="RO" className="ml-[3px] h-[22px] w-[41px] border border-[#abadb3] bg-[#f0f0f0] px-1 text-[#00009c] ring-1 ring-[#b5cfe7] ring-inset" />
          <input aria-label="Cod TVA" defaultValue="5675300" className="ml-1 h-[22px] w-[132px] border border-[#abadb3] bg-white px-1 text-[#00009c]" />
        </div>
        <Tick id="m1ss" checked className="mt-[14px] gap-[2px] self-start">
          <span className="h-[19px] border border-dotted border-black px-px leading-[17px]">M1SS (Mini 1 Stop Shop schema)</span>
        </Tick>
        <div className="mt-[17px] flex items-center">
          <label htmlFor="m1" className="w-[49px] pl-[2px]">De la:</label>
          <Select id="m1" value="04" bare className="w-[47px]" />
          <Select id="y1" label="An inceput" value="2023" bare className="ml-1 w-[59px]" />
          <label htmlFor="m2" className="ml-[35px] w-[55px] whitespace-nowrap">Pana la:</label>
          <Select id="m2" value="12" bare className="w-[50px]" />
          <Select id="y2" label="An sfarsit" value="2040" bare className="ml-px w-[59px]" />
        </div>
        <div className="mt-[41px] flex gap-[39px] pl-[2px]">
          <button type="button" className={big + "bg-[#008080]"}>Salveaza</button>
          <button type="button" className={big + "bg-[#ff731d]"}>Ignora</button>
        </div>
      </div>
    </Frame>
  );
}

/* ---------- walkthrough marks drawn over the windows ---------- */

function Marks() {
  return (
    <svg viewBox="0 0 1516 809" className="pointer-events-none absolute top-0 left-0 h-[809px] w-[1516px]" aria-hidden="true">
      <g fill="none" stroke="#ed1c24" strokeWidth="5" strokeLinejoin="round">
        <rect x="592.500" y="21.500" width="52" height="46" rx="8" />
        <path d="M592 65C520 67 480 70 460 71C385 77 350 95 330 123C316 145 315 175 316 195C319 260 342 345 350 393C355 420 360 445 365 467" />
        <rect x="323.500" y="467.500" width="123" height="78" rx="14" />
        <path d="M417 547L471 728L696 500" />
        <rect x="468.500" y="728.500" width="110" height="49" rx="12" />
        <rect x="684.500" y="341.500" width="429" height="146" rx="16" />
        <path d="M716 491.500H884Q904 494 904.500 502V546Q900 558 882 560.500H718Q698 558 694.500 546V502Q698 492 716 491.500Z" />
      </g>
    </svg>
  );
}

function Brand() {
  return (
    <div className="mt-auto flex h-[23px] shrink-0 items-start overflow-hidden pl-5">
      <svg viewBox="0 0 82 24" className="h-6 w-[82px] shrink-0" aria-hidden="true">
        <defs>
          <linearGradient id="brand" x1="0" x2="1">
            <stop offset="0" stopColor="#fb2b82" />
            <stop offset="1" stopColor="#ff6f6b" />
          </linearGradient>
        </defs>
        <path d="M0 24V12Q1 1 12 0H52L26 15Q22 18 22 24z" fill="url(#brand)" />
        <path d="M52 0h26v11z" fill="#c6c7df" />
        <path d="M55 20l8 4h-8z" fill="#c6c7df" />
      </svg>
      <p className="ml-[23px] font-['Noto_Sans',sans-serif] text-[56px] leading-[58px] font-bold text-[#b9bad6]">
        Win<span className="bg-linear-to-r from-[#f92c80] to-[#ff7a6b] bg-clip-text text-transparent">Cont</span>
      </p>
    </div>
  );
}

export default function App() {
  return (
    <div className="relative flex min-h-screen flex-col overflow-hidden bg-white font-['Liberation_Sans',Arial,sans-serif] text-black">
      <Gradients />
      <MainBar />
      <div className="h-[18px] shrink-0 bg-[#6f6f6f] text-[12px] leading-[17px] text-white">er</div>
      <div className="mt-px h-[3px] shrink-0 bg-[#ea3a63]" />
      <main className="flex flex-1">
        <div className="flex-1 border-t-2 border-[#8a8a8a]">
          <div className="mt-[35px] h-[117px] w-2 bg-[#ffffcc]" />
        </div>
        <aside className="flex w-[480px] flex-col border-l border-[#e3e3e3] bg-[#fcfcfc]">
          <div className="ml-[340px] h-[10px] w-[17px] bg-[#f0f0f0]" />
          <Brand />
        </aside>
      </main>
      <CompanyWindow />
      <VatWindow />
      <VatDialog />
      <Marks />
    </div>
  );
}
